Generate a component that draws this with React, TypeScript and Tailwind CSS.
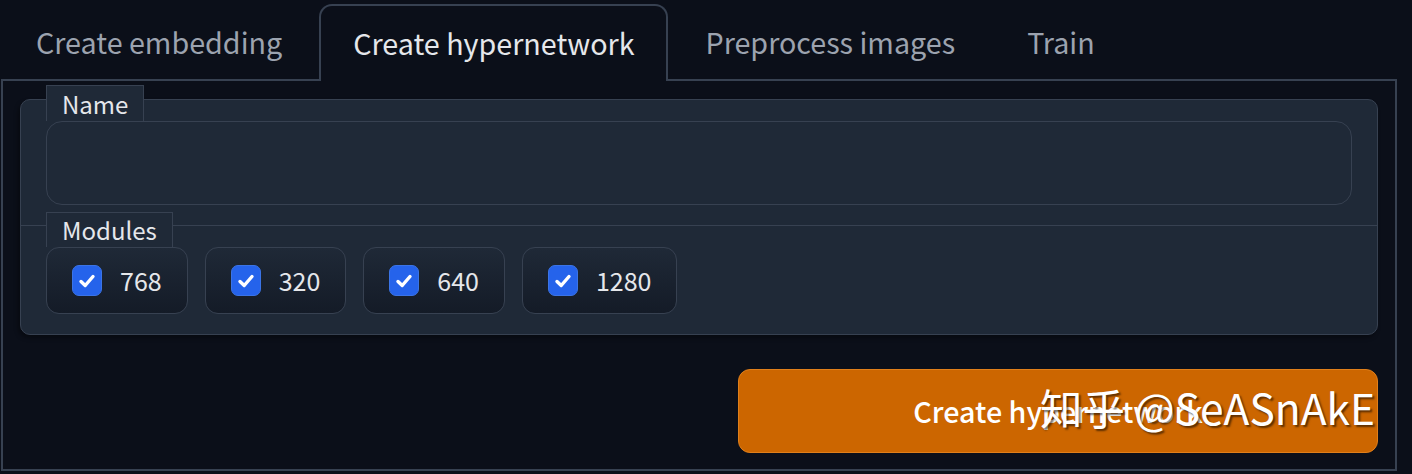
import React from "react";

const FONT = "font-['Noto_Sans_CJK_SC',sans-serif]";

function Check() {
  return (
    <div className="w-[30px] h-[31px] rounded-[7px] bg-[#2563eb] border border-[#3b74e6] flex items-center justify-center">
      <svg width="20" height="20" viewBox="0 0 20 20" fill="none">
        <path d="M4 10.5 L8.2 14.5 L16 5.5" stroke="white" strokeWidth="3.4" strokeLinecap="round" strokeLinejoin="round" />
      </svg>
    </div>
  );
}

function CheckItem({ label }: { label: string }) {
  return (
    <div className="h-[67px] pl-[25px] pr-[25px] flex items-center gap-[18px] rounded-[13px] border border-[#374151] bg-gradient-to-b from-[#1f2937] to-[#141b27]">
      <Check />
      <span className="text-[25px] leading-none text-[#e5e7eb]">{label}</span>
    </div>
  );
}

export default function App() {
  const tabs = ["Create embedding", "Create hypernetwork", "Preprocess images", "Train"];
  return (
    <div className={`w-[1412px] h-[474px] bg-[#0b0f19] overflow-hidden relative ${FONT}`}>
      <div className="flex h-[81px] pt-[4px] pl-[1px] gap-[2px] relative z-10">
        {tabs.map((t, i) =>
          i === 1 ? (
            <div
              key={t}
              className="h-[77px] px-[32px] flex items-center rounded-t-[13px] border-2 border-b-0 border-[#374151] bg-[#0b0f19] text-[28.7px] leading-none text-[#e5e7eb]"
            >
              {t}
            </div>
          ) : (
            <div key={t} className="h-[77px] px-[35px] flex items-center text-[28.7px] leading-none text-[#9ca3af]">
              {t}
            </div>
          )
        )}
      </div>
      <div className="ml-[1px] -mt-[2px] w-[1396px] h-[392px] border-2 border-[#374151] pt-[18px] px-[17px]">
        <div className="rounded-[10px] border border-[#374151] bg-[#1f2937] px-[25px] pb-[20px] shadow-[-2px_3px_4px_rgba(0,0,0,0.35)]">
          <div className="-mt-[15px] h-[36px] w-fit px-[15px] flex items-center border border-b-0 border-[#374151] bg-[#1f2937] text-[24px] leading-none text-[#e5e7eb]">
            Name
          </div>
          <div className="h-[84px] rounded-[16px] border border-[#374151] bg-[#1f2937]"></div>
          <div className="mt-[20px] -mx-[25px] px-[25px] border-t border-[#374151]">
            <div className="-mt-[14px] h-[35px] w-fit px-[15px] flex items-center border border-b-0 border-[#374151] bg-[#1f2937] text-[24px] leading-none text-[#e5e7eb]">
              Modules
            </div>
            <div className="flex gap-[17px]">
              {["768", "320", "640", "1280"].map((v) => (
                <CheckItem key={v} label={v} />
              ))}
            </div>
          </div>
        </div>
        <div className="mt-[34px] ml-auto w-[640px] h-[84px] rounded-[12px] bg-[#cc6600] border border-[#e07f1a] flex items-center justify-center text-[28.7px] font-medium leading-none text-white">
          Create hypernetwork
        </div>
      </div>
      <div className="absolute left-[1040px] top-[386px] text-[42.5px] leading-none text-white [text-shadow:2px_2px_2px_rgba(0,0,0,0.55)] whitespace-nowrap">
        知乎 @SeASnAkE
      </div>
    </div>
  );
}
